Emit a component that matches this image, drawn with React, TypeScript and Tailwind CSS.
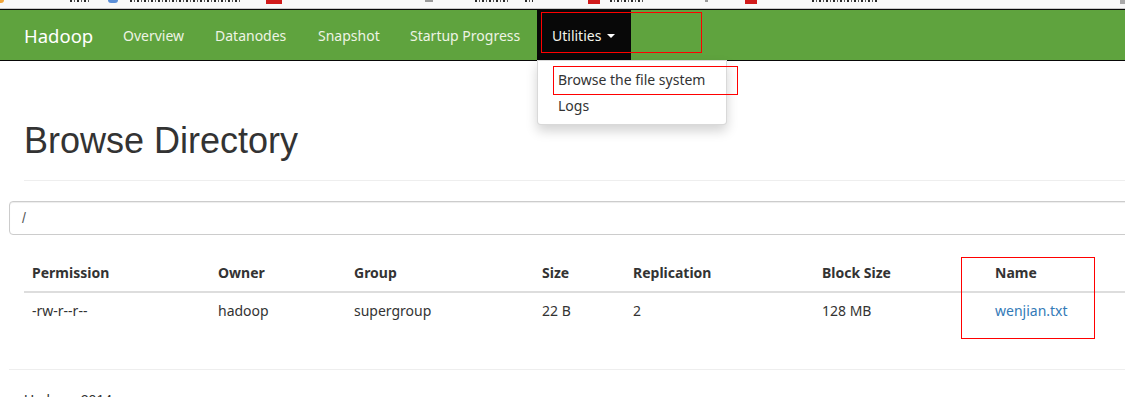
import React from "react";

const NAV = [
  { label: "Overview", w: "w-[92px]" },
  { label: "Datanodes", w: "w-[103px]" },
  { label: "Snapshot", w: "w-[92px]" },
  { label: "Startup Progress", w: "w-[142px]" },
];

const COLS = [
  { label: "Permission", value: "-rw-r--r--" },
  { label: "Owner", value: "hadoop" },
  { label: "Group", value: "supergroup" },
  { label: "Size", value: "22 B" },
  { label: "Replication", value: "2" },
  { label: "Block Size", value: "128 MB" },
];

const GRID =
  "grid grid-cols-[186px_136px_188px_91px_189px_173px_1fr]";

function BookmarkStrip() {
  // only the bottom few pixels of the browser bookmark bar are in view
  const text =
    "h-[2px] bg-[repeating-linear-gradient(90deg,#2a2a2a_0_2px,transparent_2px_4px,#555_4px_5px,transparent_5px_7px)]";
  return (
    <div className="flex h-[9px] items-start border-b border-[#c8c8c8] bg-[#f8f8f8]">
      <div className="h-[3px] w-[4px] rounded-br-full bg-[#f0a63a]" />
      <div className={`ml-[66px] w-[20px] ${text}`} />
      <div className="ml-[18px] h-[3px] w-[10px] rounded-b-[3px] bg-[#5b8fd8]" />
      <div className={`ml-[12px] w-[110px] ${text}`} />
      <div className="ml-[26px] h-[4px] w-[16px] bg-[#d11a1a]" />
      <div className="ml-[143px] h-[2px] w-[8px] bg-[#9a9a9a]" />
      <div className={`ml-[42px] w-[35px] ${text}`} />
      <div className={`ml-[15px] w-[8px] ${text}`} />
      <div className="ml-[55px] h-[4px] w-[12px] bg-[#d11a1a]" />
      <div className={`ml-[10px] w-[35px] ${text}`} />
      <div className="ml-[60px] h-[2px] w-[3px] bg-[#9a9a9a]" />
      <div className="ml-[37px] h-[4px] w-[12px] bg-[#d11a1a]" />
      <div className={`ml-[55px] w-[65px] ${text}`} />
      <div className="ml-[243px] h-[4px] w-[5px] bg-[#aaaaaa]" />
    </div>
  );
}

function Navbar() {
  return (
    <nav className="flex h-[52px] border-y border-[#080808] bg-[#5fa33e]">
      <a className="flex w-[108px] items-center pl-[24px] pt-[2px] text-[18.5px] leading-[20px] text-white">
        Hadoop
      </a>
      <ul className="flex">
        {NAV.map((n) => (
          <li key={n.label} className={`flex items-center pl-[15px] pt-[2px] ${n.w}`}>
            <a className="text-[14px] leading-[20px] text-[#eef4e4]">{n.label}</a>
          </li>
        ))}
        <li className="relative flex w-[94px] items-center bg-[#080808] pl-[15px] pt-[2px]">
          <a className="flex items-center text-[14px] leading-[20px] text-[#f4f4ea]">
            Utilities
            <span className="ml-[6px] h-0 w-0 border-x-[4px] border-t-[4px] border-x-transparent border-t-white" />
          </a>
          <ul className="absolute left-0 top-[50px] z-10 w-[190px] rounded-b-[4px] border border-[rgba(0,0,0,0.15)] bg-white pb-[5px] pt-[6px] shadow-[0_6px_12px_rgba(0,0,0,0.175)]">
            <li>
              <a className="block px-[20px] py-[3px] text-[14px] leading-[20px] text-[#333]">
                Browse the file system
              </a>
            </li>
            <li>
              <a className="block px-[20px] py-[3px] text-[14px] leading-[20px] text-[#333]">
                Logs
              </a>
            </li>
          </ul>
        </li>
      </ul>
    </nav>
  );
}

export default function App() {
  return (
    <div className="relative h-[397px] w-[1125px] overflow-hidden bg-white font-['Noto_Sans',sans-serif] text-[14px] text-[#333]">
      <BookmarkStrip />
      <Navbar />

      <div className="relative z-0">
        {/* page header */}
        <div className="ml-[24px] mt-[60px] mb-[20px] border-b border-[#eee] pb-[9px]">
          <h1 className="mb-[10px] font-['Liberation_Sans',Arial,sans-serif] text-[36px] font-normal leading-[40px] text-[#333]">
            Browse Directory
          </h1>
        </div>

        {/* path input */}
        <div className="ml-[9px] mr-[-12px] flex h-[34px] items-center rounded-[4px] border border-[#ccc] px-[12px] font-['Liberation_Sans',Arial,sans-serif] text-[14px] text-[#555] shadow-[inset_0_1px_1px_rgba(0,0,0,0.075)]">
          /
        </div>

        {/* listing */}
        <div className="ml-[24px] mt-[20px]">
          <div className={`${GRID} border-b-2 border-[#ddd]`}>
            {COLS.map((c) => (
              <div key={c.label} className="px-[8px] py-[8px] font-bold leading-[20px]">
                {c.label}
              </div>
            ))}
            <div className="px-[8px] py-[8px] font-bold leading-[20px]">Name</div>
          </div>
          <div className={GRID}>
            {COLS.map((c) => (
              <div key={c.label} className="px-[8px] py-[8px] leading-[20px]">
                {c.value}
              </div>
            ))}
            <div className="px-[8px] py-[8px] leading-[20px]">
              <a className="text-[#337ab7]">wenjian.txt</a>
            </div>
          </div>
        </div>

        <hr className="ml-[9px] mt-[40px] border-t border-[#eee]" />
        <p className="ml-[24px] mt-[20px] font-['Liberation_Sans',Arial,sans-serif] text-[14px] leading-[20px]">
          Hadoop, 2014.
        </p>
      </div>

      {/* red annotation boxes */}
      <div className="pointer-events-none absolute left-[541px] top-[12px] z-20 h-[41px] w-[161px] border border-[#ff0000]" />
      <div className="pointer-events-none absolute left-[553px] top-[66px] z-20 h-[29px] w-[185px] border border-[#ff0000]" />
      <div className="pointer-events-none absolute left-[961px] top-[257px] z-20 h-[82px] w-[134px] border border-[#ff0000]" />
    </div>
  );
}
